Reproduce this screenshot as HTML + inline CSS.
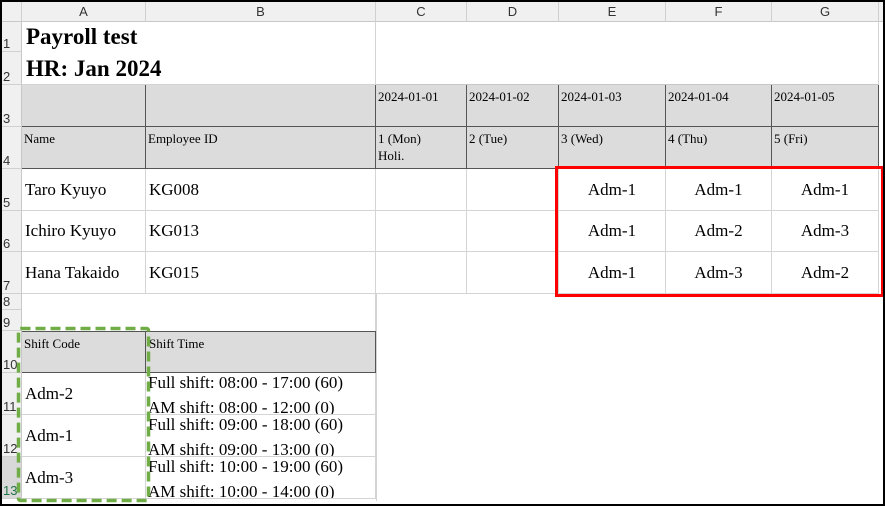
<!DOCTYPE html>
<html><head><style>
*{margin:0;padding:0;box-sizing:border-box}
body{width:885px;height:506px;background:#fff;position:relative;overflow:hidden;font-family:"Liberation Serif",serif;color:#000}
.a{position:absolute}
.ch{position:absolute;top:2px;height:20px;background:#f0f0f0;border-right:1px solid #d0d0d0;border-bottom:1px solid #c8c8c8;font:13px "Liberation Sans",sans-serif;color:#333;text-align:center;line-height:20px}
.rh{position:absolute;left:2px;width:20px;background:#f0f0f0;border-bottom:1px solid #d0d0d0;border-right:1px solid #c8c8c8;font:13px "Liberation Sans",sans-serif;color:#333;display:flex;align-items:flex-end;padding-left:1px;line-height:14px}
.c{position:absolute;border-right:1px solid #d4d4d4;border-bottom:1px solid #d4d4d4;overflow:visible;white-space:nowrap}
.g{background:#dcdcdc;border-right:1px solid #555;border-bottom:1px solid #555;font-size:13px;padding:3px 2px;line-height:17px}
.d{font-size:17px;display:flex;align-items:center;padding-left:3px}
.m{font-size:17px;display:flex;align-items:center;justify-content:center}
.s{font-size:17px;line-height:25px;padding-left:2px;overflow:hidden}
.s div{margin-top:-3px}
</style></head><body>
<div class="a" style="left:0;top:0;width:885px;height:506px;border:2px solid #000;z-index:10;pointer-events:none"></div>
<div class="ch" style="left:2px;width:20px"></div>
<div class="ch" style="left:22px;width:124px">A</div>
<div class="ch" style="left:146px;width:230px">B</div>
<div class="ch" style="left:376px;width:91px">C</div>
<div class="ch" style="left:467px;width:92px">D</div>
<div class="ch" style="left:559px;width:107px">E</div>
<div class="ch" style="left:666px;width:106px">F</div>
<div class="ch" style="left:772px;width:107px">G</div>
<div class="ch" style="left:879px;width:6px"></div>

<div class="rh" style="top:22px;height:30px">1</div>
<div class="rh" style="top:52px;height:33px">2</div>
<div class="rh" style="top:85px;height:42px">3</div>
<div class="rh" style="top:127px;height:42px">4</div>
<div class="rh" style="top:169px;height:42px">5</div>
<div class="rh" style="top:211px;height:41px">6</div>
<div class="rh" style="top:252px;height:42px">7</div>
<div class="rh" style="top:294px;height:16px">8</div>
<div class="rh" style="top:310px;height:21px">9</div>
<div class="rh" style="top:331px;height:42px">10</div>
<div class="rh" style="top:373px;height:42px">11</div>
<div class="rh" style="top:415px;height:42px">12</div>
<div class="rh" style="top:457px;height:42px;background:#d8d8d8;color:#217346">13</div>

<div class="c" style="left:22px;top:22px;width:354px;height:63px;border-right:1px solid #d4d4d4"></div>
<div class="a" style="left:26px;top:24px;font-weight:bold;font-size:23px">Payroll test</div>
<div class="a" style="left:26px;top:56px;font-weight:bold;font-size:23px">HR: Jan 2024</div>
<div class="c" style="left:376px;top:22px;width:503px;height:63px;border-bottom:1px solid #c8c8c8"></div>

<div class="c g" style="left:22px;top:85px;width:124px;height:42px"></div>
<div class="c g" style="left:146px;top:85px;width:230px;height:42px"></div>
<div class="c g" style="left:376px;top:85px;width:91px;height:42px">2024-01-01</div>
<div class="c g" style="left:467px;top:85px;width:92px;height:42px">2024-01-02</div>
<div class="c g" style="left:559px;top:85px;width:107px;height:42px">2024-01-03</div>
<div class="c g" style="left:666px;top:85px;width:106px;height:42px">2024-01-04</div>
<div class="c g" style="left:772px;top:85px;width:107px;height:42px">2024-01-05</div>
<div class="c g" style="left:22px;top:127px;width:124px;height:42px">Name</div>
<div class="c g" style="left:146px;top:127px;width:230px;height:42px">Employee ID</div>
<div class="c g" style="left:376px;top:127px;width:91px;height:42px">1 (Mon)<br>Holi.</div>
<div class="c g" style="left:467px;top:127px;width:92px;height:42px">2 (Tue)</div>
<div class="c g" style="left:559px;top:127px;width:107px;height:42px">3 (Wed)</div>
<div class="c g" style="left:666px;top:127px;width:106px;height:42px">4 (Thu)</div>
<div class="c g" style="left:772px;top:127px;width:107px;height:42px">5 (Fri)</div>

<div class="c d" style="left:22px;top:169px;width:124px;height:42px">Taro Kyuyo</div>
<div class="c d" style="left:146px;top:169px;width:230px;height:42px">KG008</div>
<div class="c" style="left:376px;top:169px;width:91px;height:42px"></div>
<div class="c" style="left:467px;top:169px;width:92px;height:42px"></div>
<div class="c m" style="left:559px;top:169px;width:107px;height:42px">Adm-1</div>
<div class="c m" style="left:666px;top:169px;width:106px;height:42px">Adm-1</div>
<div class="c m" style="left:772px;top:169px;width:107px;height:42px">Adm-1</div>

<div class="c d" style="left:22px;top:211px;width:124px;height:41px">Ichiro Kyuyo</div>
<div class="c d" style="left:146px;top:211px;width:230px;height:41px">KG013</div>
<div class="c" style="left:376px;top:211px;width:91px;height:41px"></div>
<div class="c" style="left:467px;top:211px;width:92px;height:41px"></div>
<div class="c m" style="left:559px;top:211px;width:107px;height:41px">Adm-1</div>
<div class="c m" style="left:666px;top:211px;width:106px;height:41px">Adm-2</div>
<div class="c m" style="left:772px;top:211px;width:107px;height:41px">Adm-3</div>

<div class="c d" style="left:22px;top:252px;width:124px;height:42px">Hana Takaido</div>
<div class="c d" style="left:146px;top:252px;width:230px;height:42px">KG015</div>
<div class="c" style="left:376px;top:252px;width:91px;height:42px"></div>
<div class="c" style="left:467px;top:252px;width:92px;height:42px"></div>
<div class="c m" style="left:559px;top:252px;width:107px;height:42px">Adm-1</div>
<div class="c m" style="left:666px;top:252px;width:106px;height:42px">Adm-3</div>
<div class="c m" style="left:772px;top:252px;width:107px;height:42px">Adm-2</div>

<div class="c" style="left:22px;top:294px;width:354px;height:37px;border-bottom:none"></div>
<div class="a" style="left:376px;top:294px;width:1px;height:207px;background:#d4d4d4"></div>

<div class="c g" style="left:22px;top:331px;width:124px;height:42px;border-top:1px solid #555">Shift Code</div>
<div class="c g" style="left:146px;top:331px;width:230px;height:42px;border-top:1px solid #555;padding-left:3px">Shift Time</div>
<div class="c d" style="left:22px;top:373px;width:124px;height:42px">Adm-2</div>
<div class="c s" style="left:146px;top:373px;width:230px;height:42px"><div>Full shift: 08:00 - 17:00 (60)<br>AM shift: 08:00 - 12:00 (0)</div></div>
<div class="c d" style="left:22px;top:415px;width:124px;height:42px">Adm-1</div>
<div class="c s" style="left:146px;top:415px;width:230px;height:42px"><div>Full shift: 09:00 - 18:00 (60)<br>AM shift: 09:00 - 13:00 (0)</div></div>
<div class="c d" style="left:22px;top:457px;width:124px;height:42px">Adm-3</div>
<div class="c s" style="left:146px;top:457px;width:230px;height:42px"><div>Full shift: 10:00 - 19:00 (60)<br>AM shift: 10:00 - 14:00 (0)</div></div>

<div class="a" style="left:555px;top:166px;width:329px;height:131px;border:3px solid #ff0000;z-index:5"></div>
<svg class="a" style="left:15px;top:325px;z-index:5" width="138" height="180"><rect x="3.5" y="3.5" width="130" height="172" rx="2" fill="none" stroke="#70ad47" stroke-width="3.5" stroke-dasharray="10 5"/></svg>
</body></html>
